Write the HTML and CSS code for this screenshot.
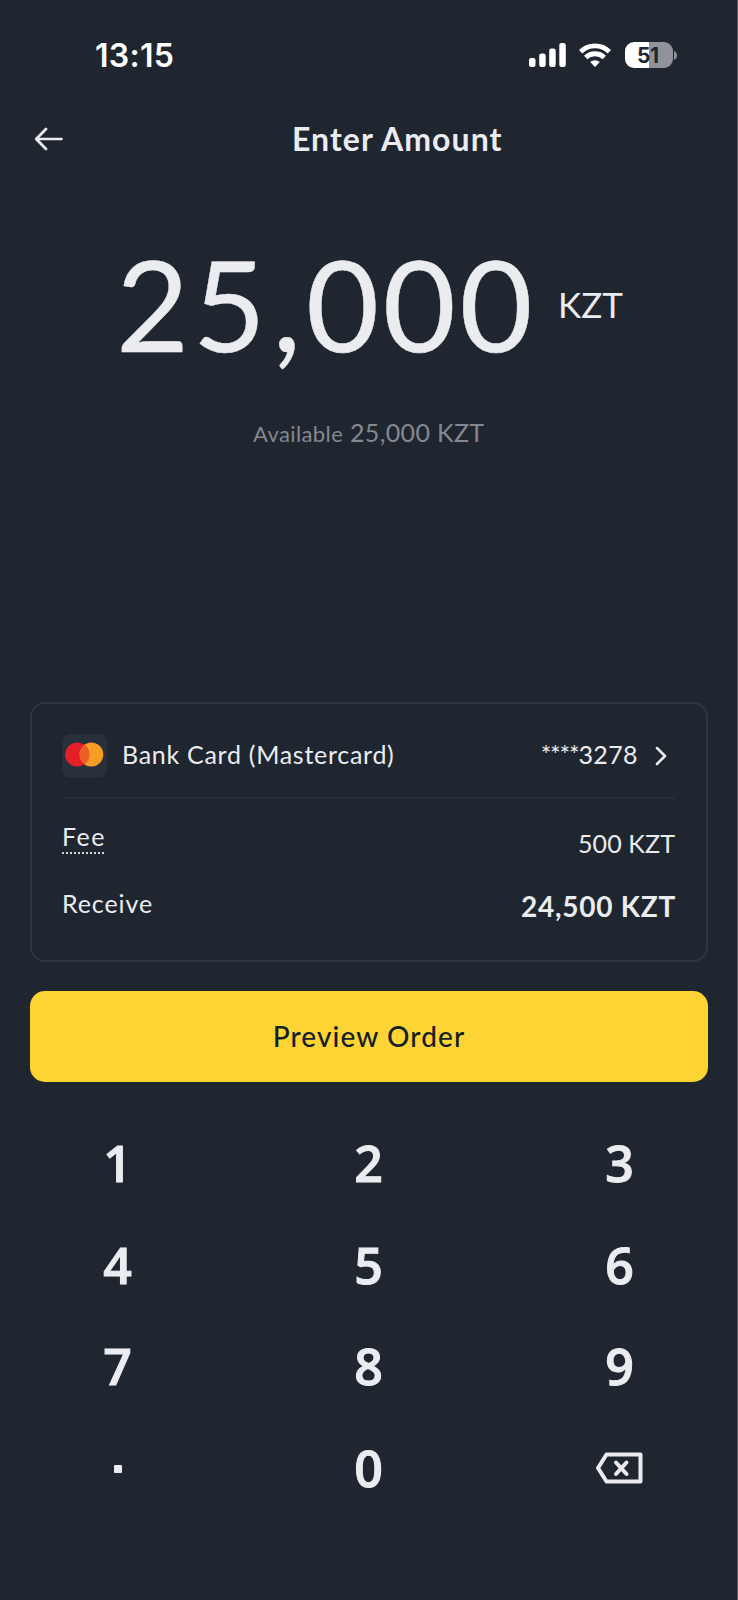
FILE: index.html
```html
<!DOCTYPE html>
<html lang="en">
<head>
<meta charset="utf-8">
<title>Enter Amount</title>
<link rel="stylesheet" href="styles.css">
</head>
<body>
<main class="screen">
  <div class="status">
    <span class="time">13:15</span>
    <svg class="signal" width="38" height="24" viewBox="0 0 38 24" fill="#fff"><rect x="0" y="15" width="6.5" height="9" rx="2.2"/><rect x="10.2" y="10.5" width="6.5" height="13.5" rx="2.2"/><rect x="20.2" y="5.5" width="6.5" height="18.5" rx="2.2"/><rect x="30.3" y="0" width="6.5" height="24" rx="2.2"/></svg>
    <svg class="wifi" width="32" height="24" viewBox="0 0 32 24" fill="none" stroke="#fff" stroke-width="4.8"><path d="M1.6 8.7a20.6 20.6 0 0 1 28.8 0"/><path d="M6.7 14.5a13.4 13.4 0 0 1 18.6 0"/><path d="M16 24l-4.8-4.9a7 7 0 0 1 9.6 0z" fill="#fff" stroke="none"/></svg>
    <span class="battery"><span class="level">51</span></span>
    <svg class="nub" width="3" height="9" viewBox="0 0 3 9"><path d="M0 0c4 1.5 4 7.5 0 9z" fill="#90939a"/></svg>
  </div>
  <header class="header">
    <svg width="29" height="24" viewBox="0 0 29 24" fill="none" stroke="#ebecf0" stroke-width="2.7" stroke-linecap="round" stroke-linejoin="round"><path d="M11 2L1.2 12L11 22M1.2 12H26.5"/></svg>
    <h1 class="title">Enter Amount</h1>
  </header>
  <section class="amount"><span class="value">25<span class="comma">,</span>000</span><span class="unit">KZT</span></section>
  <p class="available"><span class="available-label">Available</span><span class="available-value">25,000 KZT</span></p>
  <section class="card">
    <div class="method">
      <svg class="logo" width="45" height="44" viewBox="0 0 45 44"><rect width="45" height="43.5" rx="8" fill="#2a303b"/><circle cx="29.3" cy="20.5" r="12" fill="#f59d22"/><circle cx="15.2" cy="20.5" r="12" fill="#e41f27"/><path d="M22.25 10.8a12 12 0 0 1 0 19.4a12 12 0 0 1 0-19.4z" fill="#ea6026"/></svg>
      <span class="method-name">Bank Card (Mastercard)</span>
      <span class="digits"><span class="stars">****</span>3278</span>
      <svg class="chevron" width="12" height="20" viewBox="0 0 12 20" fill="none" stroke="#ebecf0" stroke-width="2.5" stroke-linecap="round" stroke-linejoin="round"><path d="M2 2l8 8l-8 8"/></svg>
    </div>
    <div class="row fee"><span class="fee-label">Fee</span><span class="fee-value">500 KZT</span></div>
    <div class="row receive"><span class="receive-label">Receive</span><span class="receive-value">24,500 KZT</span></div>
  </section>
  <button class="preview">Preview Order</button>
  <div class="keypad">
    <span>1</span><span>2</span><span>3</span>
    <span>4</span><span>5</span><span>6</span>
    <span>7</span><span>8</span><span>9</span>
    <span><i class="dot"></i></span><span>0</span>
    <span><svg width="48" height="32" viewBox="0 0 48 32" fill="none" stroke="#ebecf0" stroke-width="4" stroke-linejoin="round"><path d="M10.5 2.5H44.5V29.5H10.5L2 16z"/><path d="M20 10.5l10.5 11.5M30.5 10.5l-10.5 11.5" stroke-linecap="round"/></svg></span>
  </div>
</main>
</body>
</html>
```

FILE: styles.css
```css
* { box-sizing: border-box; }
body { margin: 0; background: #202630; }
.screen {
  width: 738px;
  height: 1600px;
  padding: 0 30px;
  overflow: hidden;
  background: #202630;
  border-right: 1px solid #555a62;
  color: #ebecf0;
  font-family: Lato, "Open Sans", sans-serif;
}
.status { display: flex; align-items: center; height: 110px; padding-left: 65px; }
.time { width: 434px; padding-top: 2px; font: 600 32px/40px Inter, sans-serif; letter-spacing: 0.3px; color: #fff; }
.wifi { margin-left: 12px; }
.battery {
  display: flex;
  width: 48px;
  height: 26px;
  margin-left: 14px;
  padding-left: 12px;
  border-radius: 9px;
  background: linear-gradient(90deg, #fff 24px, #90939a 24px);
}
.level { font: 700 21px/28px Inter, sans-serif; color: #202630; letter-spacing: -0.3px; }
.nub { margin-left: 1px; }
.header { display: flex; align-items: center; height: 58px; padding-left: 5px; }
.title { margin: -1px 0 0 228px; font-size: 32px; line-height: 40px; font-weight: 700; letter-spacing: 1.05px; }
.amount { display: flex; align-items: center; height: 234px; padding: 37px 0 0 86px; }
.value { width: 442px; font-size: 126px; line-height: 150px; letter-spacing: 3.7px; -webkit-text-stroke: 0.4px #ebecf0; }
.comma { margin: 0 1px 0 3px; }
.unit { font-size: 35px; line-height: 44px; }
.available { display: flex; align-items: baseline; height: 40px; margin: 10px 0 0 223px; line-height: 40px; color: #85888f; white-space: nowrap; }
.available-label { width: 97px; font-size: 22px; letter-spacing: 0.4px; }
.available-value { font-size: 25px; letter-spacing: 0.35px; }
.card {
  width: 678px;
  height: 260px;
  margin-top: 250px;
  padding: 0 31px 0 30px;
  border: 2px solid #303641;
  border-radius: 15px;
  font-size: 25px;
}
.method { display: flex; align-items: center; height: 95px; padding-top: 10px; border-bottom: 2px solid #282e38; }
.logo { flex: none; margin-right: 15px; }
.method-name { flex: 1; margin-top: -3px; letter-spacing: 0.72px; }
.digits { margin-top: -3px; letter-spacing: 0.4px; }
.stars { letter-spacing: -1.2px; }
.chevron { margin: 0 8px 0 17px; }
.row { display: flex; justify-content: space-between; line-height: 30px; }
.fee { padding-top: 22px; }
.fee-label {
  height: 33px;
  letter-spacing: 1.5px;
  background: repeating-linear-gradient(90deg, #d4d6da 0 2px, transparent 2px 4px) 0 100% / 100% 2px no-repeat;
}
.fee-value { margin-top: 7px; letter-spacing: 0.1px; }
.receive { padding-top: 30px; }
.receive-label { letter-spacing: 0.9px; }
.receive-value { font-size: 28px; font-weight: 700; margin: 3px -1px 0 0; letter-spacing: 0.75px; }
.preview {
  display: block;
  width: 678px;
  height: 91px;
  margin: 29px 0 0;
  padding: 0;
  border: 0;
  border-radius: 15px;
  background: #fcd535;
  color: #181e28;
  font: 500 28px/91px Lato, sans-serif;
  letter-spacing: 1.1px;
}
.keypad {
  display: grid;
  grid-template-columns: repeat(3, 251px);
  grid-auto-rows: 101.5px;
  margin: 31px 0 0 -38px;
  width: 753px;
  font-family: "Open Sans", sans-serif;
  font-size: 50px;
  line-height: 68px;
  font-weight: 600;
  -webkit-text-stroke: 1px #ebecf0;
}
.keypad span { display: flex; align-items: center; justify-content: center; padding-bottom: 1px; }
.keypad .dot { width: 8px; height: 8px; margin-top: 2px; border-radius: 1px; background: #ebecf0; }
```
